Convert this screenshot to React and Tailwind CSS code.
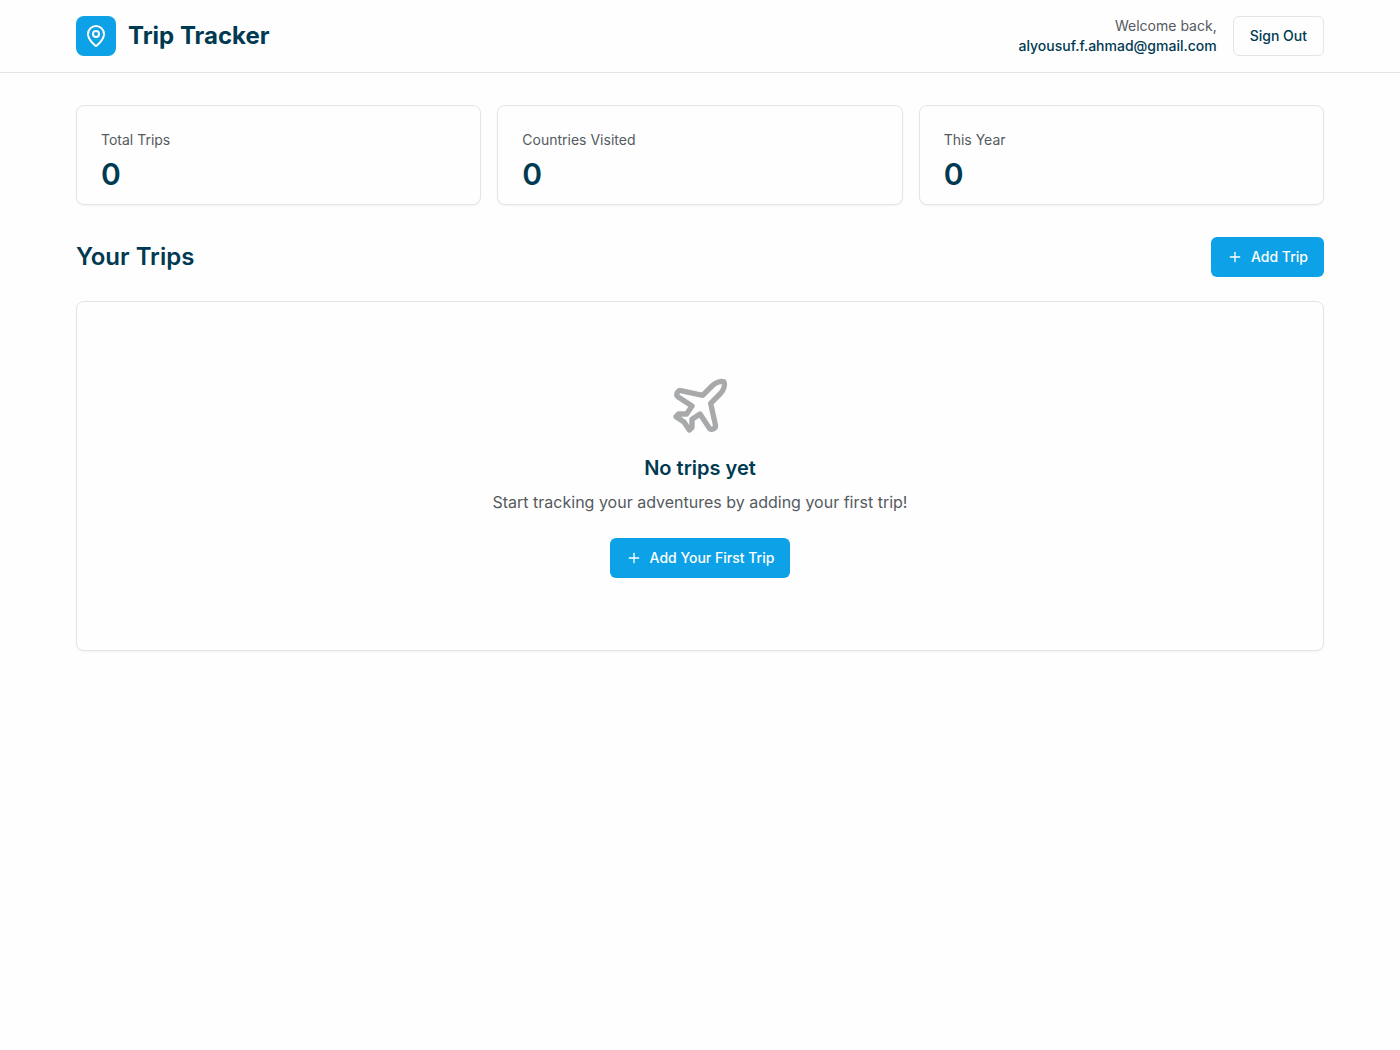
import React from 'react';
import { MapPin, Plane, Plus } from 'lucide-react';

const STATS = [
    { label: 'Total Trips', value: 0 },
    { label: 'Countries Visited', value: 0 },
    { label: 'This Year', value: 0 },
];

// ── Shared pieces ─────────────────────────────────────────
const Card = ({ className = '', children }) => (
    <div className={`rounded-lg border border-[#e2e6e9] bg-[#fefefe] shadow-xs ${className}`}>
        {children}
    </div>
);

const AddButton = ({ children }) => (
    <button
        type="button"
        className="inline-flex h-10 items-center justify-center rounded-md bg-[#0da2e7] px-4 text-sm font-medium text-white hover:bg-[#0da2e7]/90"
    >
        <Plus className="mr-2 size-4" />
        {children}
    </button>
);

// ── Header ────────────────────────────────────────────────
const Header = ({ email }) => (
    <header className="border-b border-[#e2e6e9] bg-[#fefefe]">
        <div className="mx-auto flex max-w-7xl items-center justify-between px-4 py-4">
            <div className="flex items-center gap-3">
                <div className="flex size-10 items-center justify-center rounded-lg bg-[#0da2e7]">
                    <MapPin className="size-6 text-white" />
                </div>
                <h1 className="text-2xl font-bold text-[#003a52]">Trip Tracker</h1>
            </div>
            <div className="flex items-center gap-4">
                <div className="text-right text-sm">
                    <p className="text-[#555a60]">Welcome back,</p>
                    <p className="font-medium text-[#003a52]">{email}</p>
                </div>
                <button
                    type="button"
                    className="h-10 rounded-md border border-[#e2e6e9] bg-[#fefefe] px-4 text-sm font-medium text-[#003a52] hover:bg-gray-50"
                >
                    Sign Out
                </button>
            </div>
        </div>
    </header>
);

const EmptyState = () => (
    <Card className="flex flex-col items-center px-6 py-18 text-center">
        <Plane className="mb-4 size-16 text-[#a7a9ab]" />
        <h3 className="mb-2 text-xl font-semibold text-[#003a52]">No trips yet</h3>
        <p className="mb-6 text-[#555a60]">Start tracking your adventures by adding your first trip!</p>
        <AddButton>Add Your First Trip</AddButton>
    </Card>
);

const App = () => (
    <div className="min-h-screen bg-[#fefefe] font-['Inter',sans-serif] antialiased">
        <Header email="alyousuf.f.ahmad@gmail.com" />

        <main className="mx-auto max-w-7xl px-4 py-8">
            <div className="mb-8 grid grid-cols-1 gap-4 md:grid-cols-3">
                {STATS.map(stat => (
                    <Card key={stat.label} className="px-6 pt-6 pb-3">
                        <p className="text-sm text-[#555a60]">{stat.label}</p>
                        <p className="mt-1.5 text-3xl font-semibold text-[#003a52]">{stat.value}</p>
                    </Card>
                ))}
            </div>

            <div className="mb-6 flex items-center justify-between">
                <h2 className="text-2xl font-semibold text-[#003a52]">Your Trips</h2>
                <AddButton>Add Trip</AddButton>
            </div>

            <EmptyState />
        </main>
    </div>
);

export default App;
